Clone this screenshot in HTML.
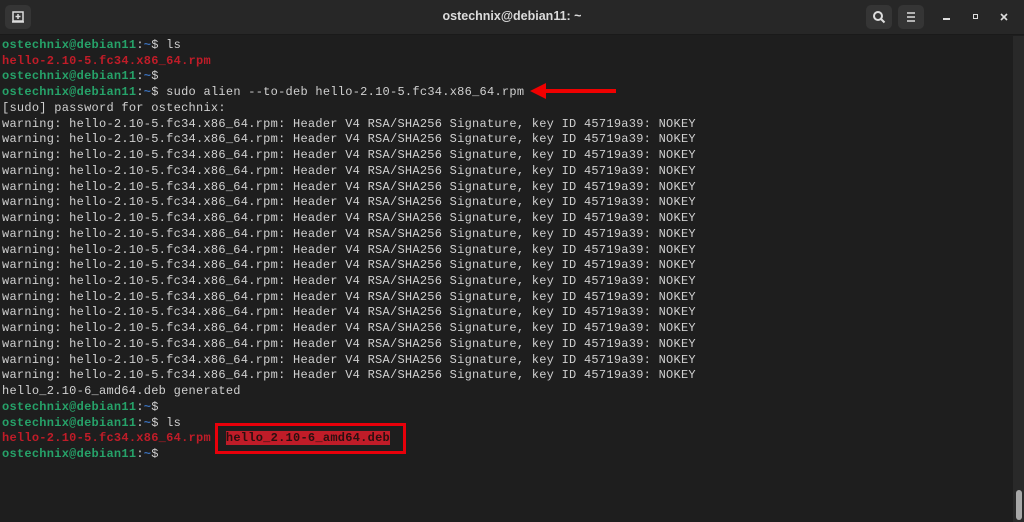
<!DOCTYPE html>
<html><head><meta charset="utf-8"><style>
*{margin:0;padding:0;box-sizing:border-box}
body{width:1024px;height:522px;background:#1e1e1e;overflow:hidden;position:relative;font-family:"Liberation Mono",monospace}
.hdr{position:absolute;left:0;top:0;width:1024px;height:35px;background:#272727;border-bottom:1px solid #1a1a1a}
.btn{position:absolute;top:5px;width:26px;height:24px;background:#353535;border-radius:5px}
.title{position:absolute;left:0;width:1024px;top:9px;text-align:center;color:#dcdcdc;font:bold 12.5px "Liberation Sans",sans-serif}
.term{position:absolute;left:2px;top:38px;font-size:12px;letter-spacing:0.26px;line-height:15.73px;color:#d0d0d0;white-space:pre}
.g{color:#26a269;font-weight:bold}.b{color:#3a6fb8;font-weight:bold}.r{color:#c01c28;font-weight:bold}
.hl{background:#c01c28;color:#2a1010;font-weight:bold}
.sb{position:absolute;left:1013px;top:36px;width:11px;height:486px;background:#292929}
.th{position:absolute;left:1016px;top:490px;width:6px;height:30px;background:#a8a8a8;border-radius:3px}
.box{position:absolute;left:215px;top:423px;width:191px;height:31px;border:3px solid #e8000a}
</style></head><body>
<div class="hdr">
 <div class="btn" style="left:5px"><svg width="26" height="24"><rect x="8" y="7" width="10" height="9" fill="none" stroke="#ddd" stroke-width="1.5"/><path d="M13 9v5M10.5 11.5h5M7 17h12" stroke="#ddd" stroke-width="1.5"/></svg></div>
 <div class="title">ostechnix@debian11: ~</div>
 <div class="btn" style="left:866px"><svg width="26" height="24"><circle cx="12" cy="11" r="4" fill="none" stroke="#ddd" stroke-width="2"/><path d="M15 14l3.5 3.5" stroke="#ddd" stroke-width="2"/></svg></div>
 <div class="btn" style="left:898px"><svg width="26" height="24"><path d="M9 8h8M9 12h8M9 16h8" stroke="#ddd" stroke-width="1.6"/></svg></div>
 <div style="position:absolute;left:943px;top:18px;width:7px;height:2px;background:#ddd"></div>
 <div style="position:absolute;left:973px;top:14px;width:5px;height:5px;border:1.5px solid #ddd"></div>
 <svg style="position:absolute;left:1000px;top:13px" width="8" height="8"><path d="M1 1l6 6M7 1l-6 6" stroke="#ddd" stroke-width="1.6"/></svg>
</div>
<div class="term"><span class="g">ostechnix@debian11</span>:<span class="b">~</span>$ ls
<span class="r">hello-2.10-5.fc34.x86_64.rpm</span>
<span class="g">ostechnix@debian11</span>:<span class="b">~</span>$
<span class="g">ostechnix@debian11</span>:<span class="b">~</span>$ sudo alien --to-deb hello-2.10-5.fc34.x86_64.rpm
[sudo] password for ostechnix:
warning: hello-2.10-5.fc34.x86_64.rpm: Header V4 RSA/SHA256 Signature, key ID 45719a39: NOKEY
warning: hello-2.10-5.fc34.x86_64.rpm: Header V4 RSA/SHA256 Signature, key ID 45719a39: NOKEY
warning: hello-2.10-5.fc34.x86_64.rpm: Header V4 RSA/SHA256 Signature, key ID 45719a39: NOKEY
warning: hello-2.10-5.fc34.x86_64.rpm: Header V4 RSA/SHA256 Signature, key ID 45719a39: NOKEY
warning: hello-2.10-5.fc34.x86_64.rpm: Header V4 RSA/SHA256 Signature, key ID 45719a39: NOKEY
warning: hello-2.10-5.fc34.x86_64.rpm: Header V4 RSA/SHA256 Signature, key ID 45719a39: NOKEY
warning: hello-2.10-5.fc34.x86_64.rpm: Header V4 RSA/SHA256 Signature, key ID 45719a39: NOKEY
warning: hello-2.10-5.fc34.x86_64.rpm: Header V4 RSA/SHA256 Signature, key ID 45719a39: NOKEY
warning: hello-2.10-5.fc34.x86_64.rpm: Header V4 RSA/SHA256 Signature, key ID 45719a39: NOKEY
warning: hello-2.10-5.fc34.x86_64.rpm: Header V4 RSA/SHA256 Signature, key ID 45719a39: NOKEY
warning: hello-2.10-5.fc34.x86_64.rpm: Header V4 RSA/SHA256 Signature, key ID 45719a39: NOKEY
warning: hello-2.10-5.fc34.x86_64.rpm: Header V4 RSA/SHA256 Signature, key ID 45719a39: NOKEY
warning: hello-2.10-5.fc34.x86_64.rpm: Header V4 RSA/SHA256 Signature, key ID 45719a39: NOKEY
warning: hello-2.10-5.fc34.x86_64.rpm: Header V4 RSA/SHA256 Signature, key ID 45719a39: NOKEY
warning: hello-2.10-5.fc34.x86_64.rpm: Header V4 RSA/SHA256 Signature, key ID 45719a39: NOKEY
warning: hello-2.10-5.fc34.x86_64.rpm: Header V4 RSA/SHA256 Signature, key ID 45719a39: NOKEY
warning: hello-2.10-5.fc34.x86_64.rpm: Header V4 RSA/SHA256 Signature, key ID 45719a39: NOKEY
hello_2.10-6_amd64.deb generated
<span class="g">ostechnix@debian11</span>:<span class="b">~</span>$
<span class="g">ostechnix@debian11</span>:<span class="b">~</span>$ ls
<span class="r">hello-2.10-5.fc34.x86_64.rpm</span>  <span class="hl">hello_2.10-6_amd64.deb</span>
<span class="g">ostechnix@debian11</span>:<span class="b">~</span>$</div>
<div class="box"></div>
<svg style="position:absolute;left:528px;top:82px" width="90" height="18"><path d="M14 9H88" stroke="#f00000" stroke-width="4"/><path d="M2 9L18 1V17Z" fill="#f00000"/></svg>
<div class="sb"></div><div class="th"></div>
</body></html>
